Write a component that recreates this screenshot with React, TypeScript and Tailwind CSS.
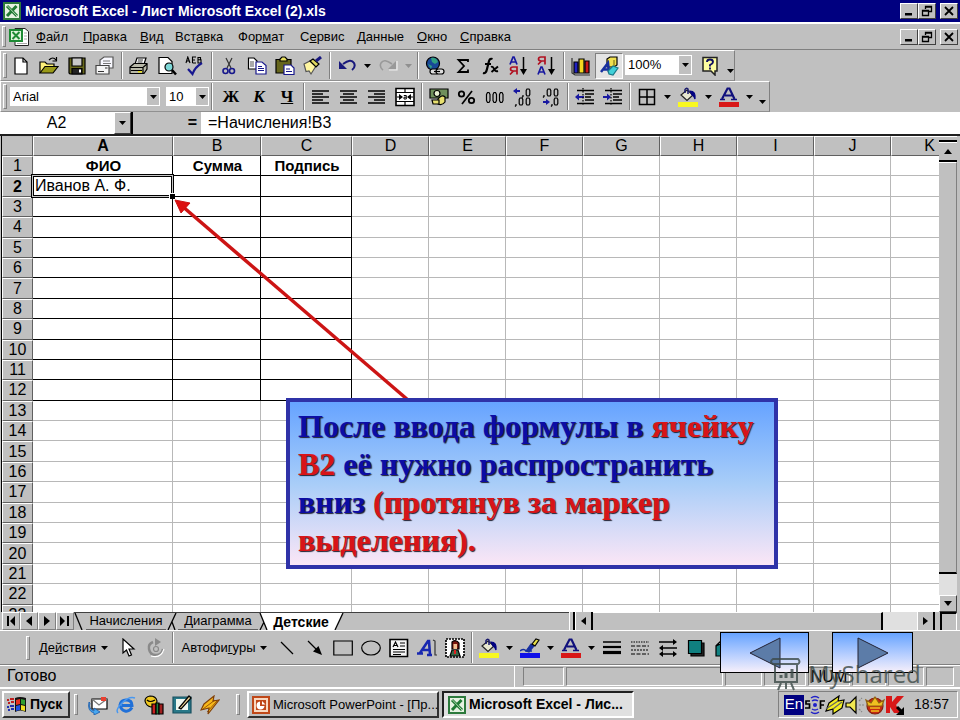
import type { ReactNode } from 'react'

// window furniture
const raised = 'bg-[#c0c0c0] border border-t-white border-l-white border-r-[#404040] border-b-[#404040]'
const sunken = 'border border-t-[#808080] border-l-[#808080] border-r-white border-b-white'

const menu = [
  { key: 'Ф', before: '', after: 'айл', width: 'w-[47px]' },
  { key: 'П', before: '', after: 'равка', width: 'w-[57px]' },
  { key: 'В', before: '', after: 'ид', width: 'w-[35px]' },
  { key: 'а', before: 'Вст', after: 'вка', width: 'w-[63px]' },
  { key: 'м', before: 'Фор', after: 'ат', width: 'w-[62px]' },
  { key: 'е', before: 'С', after: 'рвис', width: 'w-[57px]' },
  { key: 'Д', before: '', after: 'анные', width: 'w-[60px]' },
  { key: 'О', before: '', after: 'кно', width: 'w-[43px]' },
  { key: 'С', before: '', after: 'правка', width: 'w-[60px]' },
]

const columns = ['A', 'B', 'C', 'D', 'E', 'F', 'G', 'H', 'I', 'J', 'K']
const columnWidths = [
  'w-[140px]', 'w-[88px]', 'w-[91px]', 'w-[77px]', 'w-[77px]', 'w-[77px]',
  'w-[77px]', 'w-[77px]', 'w-[77px]', 'w-[77px]', 'w-[77px]',
]
const rows = Array.from({ length: 23 }, (_, i) => i + 1)
const cells: Record<string, string> = { A1: 'ФИО', B1: 'Сумма', C1: 'Подпись', A2: 'Иванов А. Ф.' }

function Icon({ children }: { children: ReactNode }) {
  return (
    <svg viewBox="0 0 20 20" className="size-5 shrink-0" fill="none" stroke="#000" strokeWidth="1.2" aria-hidden="true">
      {children}
    </svg>
  )
}

function Tool({ label, children, pressed }: { label: string; children: ReactNode; pressed?: boolean }) {
  return (
    <button
      type="button"
      aria-label={label}
      className={`flex h-[26px] w-7 shrink-0 items-center justify-center ${pressed ? `bg-[#e4e4e4] ${sunken}` : ''}`}
    >
      {children}
    </button>
  )
}

function Triangle({ gray }: { gray?: boolean }) {
  return (
    <svg viewBox="0 0 7 4" className="h-1 w-[7px] shrink-0" aria-hidden="true">
      <path d="M0 0h7L3.500 4z" fill={gray ? '#909090' : '#000'} />
    </svg>
  )
}

function More({ label, gray, low }: { label: string; gray?: boolean; low?: boolean }) {
  return (
    <button type="button" aria-label={label} className={`flex h-[26px] w-[13px] shrink-0 justify-center ${low ? 'items-end pb-[6px]' : 'items-center'}`}>
      <Triangle gray={gray} />
    </button>
  )
}

function Sep() {
  return (
    <span className="flex w-[6px] shrink-0 justify-center self-stretch">
      <span className="my-px w-[2px] border-l border-l-[#808080] border-r border-r-white" />
    </span>
  )
}

function Grip() {
  return <span className="my-[2px] w-1 shrink-0 self-stretch border border-t-white border-l-white border-r-[#808080] border-b-[#808080]" />
}

function Combo({ label, value, width, height }: { label: string; value: string; width: string; height: string }) {
  return (
    <span className={`relative flex shrink-0 border border-white bg-white ${width} ${height}`}>
      <select aria-label={label} className="w-full appearance-none pr-3 pl-[2px] text-[13px] leading-4 outline-none" defaultValue={value}>
        <option>{value}</option>
      </select>
      <span className="pointer-events-none absolute inset-y-0 right-0 flex w-3 items-center justify-center bg-[#c0c0c0]">
        <Triangle />
      </span>
    </span>
  )
}

function ExcelLogo() {
  return (
    <svg viewBox="0 0 18 18" className="size-[18px] shrink-0" aria-hidden="true">
      <path d="M0 0h18v18H0z" fill="#2c7a3c" />
      <path d="M2 2h14v14H2z" fill="#e6f2e2" />
      <path d="M4 4l10 10M13.500 4L4 14" stroke="#1f7a34" strokeWidth="3" />
      <path d="M4 3.500l10 10.500" stroke="#d8f0d0" strokeWidth=".8" />
    </svg>
  )
}

function SheetLogo() {
  return (
    <svg viewBox="0 0 20 18" className="h-[18px] w-5 shrink-0" aria-hidden="true">
      <path d="M6 .5h10l3.500 3v14H6z" fill="#fff" stroke="#222" />
      <path d="M0 1h14v13H0z" fill="#1d8a34" />
      <path d="M2 3h10v9H2z" fill="#e0f4dc" />
      <path d="M3.500 4l7 7M10.500 4l-7 7" stroke="#1d8a34" strokeWidth="2" />
      <path d="M15 5h3M15 8h3M15 11h3M8 15.500h10" stroke="#aaa" />
    </svg>
  )
}

function WindowButtons() {
  const cls = `flex h-4 w-[18px] items-center justify-center ${raised}`
  return (
    <span className="flex shrink-0 pr-[2px]">
      <button type="button" aria-label="Свернуть" className={cls}>
        <svg viewBox="0 0 12 12" className="size-3"><path d="M2 8h7v2.500H2z" /></svg>
      </button>
      <button type="button" aria-label="Восстановить" className={cls}>
        <svg viewBox="0 0 12 12" className="size-3" fill="none" stroke="#000" strokeWidth="1.300">
          <path d="M4.500 4V1.500h6v5H8M4 2h7M1.500 5.500h6v5h-6zM1 6h7" />
        </svg>
      </button>
      <button type="button" aria-label="Закрыть" className={`ml-1 ${cls}`}>
        <svg viewBox="0 0 12 12" className="size-3"><path d="M2 2l8 8M10 2l-8 8" stroke="#000" strokeWidth="1.800" /></svg>
      </button>
    </span>
  )
}

function FillBucket({ bar }: { bar: string }) {
  return (
    <Icon>
      <path d="M3 8l6-5 6 5-6 5.500z" fill="#e8e8d0" stroke="#222" />
      <path d="M7 6V2.500Q8 .5 10 2v5" stroke="#18186c" strokeWidth="1.500" />
      <path d="M12 4q6 0 5 8-1-3-3-4z" fill="#000080" stroke="#000080" />
      <path d="M0 15h20v5H0z" fill={bar} stroke="none" />
    </Icon>
  )
}

function FontColor() {
  return (
    <Icon>
      <path d="M3 12L8.500 1.500h2L15.500 12M6 8.500h7" stroke="#10107c" strokeWidth="2.200" />
      <path d="M1 12.500h5M12 12.500h6" stroke="#10107c" strokeWidth="1.500" />
      <path d="M0 15h20v5H0z" fill="#d81818" stroke="none" />
    </Icon>
  )
}

function SortIcon({ desc }: { desc?: boolean }) {
  const a = <path d="M1 8.500L4 1h1l3 7.500M2.500 6h4" />
  const ya = <path d="M8 8.500V1H4Q1.500 1.200 1.500 3T4 5h4M4.500 5L1 8.500" />
  return (
    <Icon>
      <g strokeWidth="1.700">
        <g stroke={desc ? '#b01020' : '#1818a0'}>{desc ? ya : a}</g>
        <g stroke={desc ? '#1818a0' : '#b01020'} transform="translate(0 10)">{desc ? a : ya}</g>
      </g>
      <path d="M14.500 1v15" strokeWidth="1.500" />
      <path d="M11 13h7l-3.500 6z" fill="#000" stroke="none" />
    </Icon>
  )
}

function AlignIcon({ d }: { d: string }) {
  return <Icon><path d={d} strokeWidth="1.600" /></Icon>
}

function StandardToolbar() {
  return (
    <div className="flex h-[31px] w-[735px] max-w-full items-center border border-t-white border-l-white border-r-[#808080] border-b-[#909090] pl-[2px]">
      <Grip />
      <Tool label="Создать"><Icon><path d="M4 2h8l4 4v12H4z" fill="#fff" /><path d="M12 2v4h4" /></Icon></Tool>
      <Tool label="Открыть">
        <Icon>
          <path d="M1 17V6h5l2 2h7v3" fill="#fff27a" />
          <path d="M1 17l5-6.500h13L14 17z" fill="#9a9a18" />
          <path d="M10 4q4-4 7 0M17.500 1v4h-4" />
        </Icon>
      </Tool>
      <Tool label="Сохранить">
        <Icon>
          <path d="M2 2h16v16H3l-1-1z" fill="#68681c" />
          <path d="M5 2h10v8H5z" fill="#c8c8c8" />
          <path d="M5 12.500h10V18H5z" fill="#222" />
          <path d="M12 13.500h2v3h-2z" fill="#fff" stroke="none" />
        </Icon>
      </Tool>
      <Tool label="Отправить">
        <Icon>
          <path d="M5 10V4l4-3h9v11h-4" fill="#f8f8ff" stroke="#555" />
          <path d="M8 5h7M8 7.500h8" stroke="#777" />
          <path d="M1 9.500h13V18H1z" fill="#f4f4f4" stroke="#444" />
          <path d="M3 15.500h6M10 12h2.500" stroke="#333" />
        </Icon>
      </Tool>
      <Sep />
      <Tool label="Печать">
        <Icon>
          <path d="M6 8l2-6h9l-2 6" fill="#fff" />
          <path d="M9 4h5M8.500 6h5" strokeWidth=".8" />
          <path d="M1 11l4-3.500h13V13l-3 4.500H1z" fill="#b8b8a8" />
          <path d="M1 11.500h13L18 8M14 12v5M2 14.500h11" />
          <path d="M9 15h4v1.500H9z" fill="#e8e020" stroke="none" />
        </Icon>
      </Tool>
      <Tool label="Просмотр">
        <Icon>
          <path d="M2 1.500h9l4 4v12H2z" fill="#fff" />
          <circle cx="12" cy="11" r="4" fill="#7ed8d8" />
          <path d="M15 14l4 4.500" strokeWidth="2.500" />
        </Icon>
      </Tool>
      <Tool label="Орфография">
        <Icon>
          <path d="M1 7l1.800-6L5 7M1.500 5h3M7.500 7V1H11M7.500 4H10M7.500 7H11M13 7V1.500h2.500v2.200H13h3V7z" strokeWidth="1.100" />
          <path d="M3 13l4.500 5Q10 11 17 7" stroke="#181890" strokeWidth="2.200" />
        </Icon>
      </Tool>
      <Sep />
      <Tool label="Вырезать">
        <Icon>
          <path d="M7 2l5 10M13 2L8 12" stroke="#333" />
          <circle cx="6.500" cy="15" r="2.500" stroke="#18188c" strokeWidth="1.600" />
          <circle cx="13" cy="15" r="2.500" stroke="#18188c" strokeWidth="1.600" />
        </Icon>
      </Tool>
      <Tool label="Копировать">
        <Icon>
          <path d="M1.500 2H7l3 3v8H1.500z" fill="#fff" />
          <path d="M3 6h4M3 8h4M3 10h4" stroke="#555" />
          <path d="M9 6h6l4 3.500V18H9z" fill="#fff" stroke="#18188c" />
          <path d="M11 10.500h4M11 12.500h6M11 14.500h6" stroke="#18188c" />
        </Icon>
      </Tool>
      <Tool label="Вставить">
        <Icon>
          <path d="M1 3.500h15V17H1z" fill="#66661c" />
          <path d="M5 5V3l2-2h3l2 2v2z" fill="#e8e060" />
          <path d="M9 9h7l3 3v6.500H9z" fill="#fff" stroke="#18188c" />
          <path d="M11 13h4M11 15.500h6" stroke="#18188c" />
        </Icon>
      </Tool>
      <Tool label="Формат по образцу">
        <Icon>
          <path d="M1 8l6-3 6 5-5 8-2-3-3 .5z" fill="#fff6a0" stroke="#555" />
          <path d="M7 5l3-2 6 5-3 3z" fill="#e0d860" />
          <path d="M13 5l5-4" stroke="#181880" strokeWidth="3" />
        </Icon>
      </Tool>
      <Sep />
      <Tool label="Отменить"><Icon><path d="M6 8q8-6 11-1 2 4-2 7" stroke="#18187c" strokeWidth="2" /><path d="M2 5v8h8z" fill="#18187c" stroke="none" /></Icon></Tool>
      <More label="Список отмены" />
      <Tool label="Вернуть"><Icon><path d="M14 8Q6 2 3 7q-2 4 2 7" stroke="#999" strokeWidth="1.600" /><path d="M18 5v8h-8z" fill="#999" stroke="none" /><path d="M19 5v9h-8" stroke="#eee" /></Icon></Tool>
      <More label="Список возврата" gray />
      <Sep />
      <Tool label="Гиперссылка">
        <Icon>
          <circle cx="8" cy="7.500" r="6.500" fill="#184898" />
          <path d="M6 2q5-1 7 4l-3 2-3-2zM3 8l4 2-1 3z" fill="#30a080" stroke="none" />
          <rect x="5" y="13" width="8" height="5" rx="2.500" fill="#ddd" />
          <rect x="11" y="13" width="8" height="5" rx="2.500" fill="#ddd" />
          <path d="M9 15.500h6" />
        </Icon>
      </Tool>
      <Tool label="Автосумма"><Icon><path d="M15 6V4H5.500l5.500 6-5.500 6H15v-2.500" strokeWidth="1.800" /></Icon></Tool>
      <Tool label="Вставка функции"><Icon><path d="M2 17q3 1 4-4l2-8q1-3 3.500-2M4 8h6" strokeWidth="2.200" /><path d="M10 11q2-1 3 2t4 2M17 10.500l-6.500 5.500" strokeWidth="1.900" /></Icon></Tool>
      <Tool label="По возрастанию"><SortIcon /></Tool>
      <Tool label="По убыванию"><SortIcon desc /></Tool>
      <Sep />
      <Tool label="Мастер диаграмм">
        <Icon>
          <path d="M1 2v15l3 2h15" stroke="#333" />
          <path d="M3 6h4v11H3z" fill="#2020c0" />
          <path d="M8 3h5v14H8z" fill="#f4d820" />
          <path d="M14 5h4v12h-4z" fill="#c81818" />
        </Icon>
      </Tool>
      <Tool label="Рисование" pressed>
        <Icon>
          <path d="M8 3l3-2h7v8l-3 2H8z" fill="#f0e050" />
          <path d="M15 4v6" stroke="#807818" />
          <path d="M2 16l7-9 1 9M4 13.500h6" stroke="#1830a0" strokeWidth="2.500" />
          <path d="M9 15l5-5 5 2-5 7-4-1z" fill="#40d0d8" stroke="#187888" />
        </Icon>
      </Tool>
      <span className="ml-[2px] mb-[2px] flex"><Combo label="Масштаб" value="100%" width="w-[67px]" height="h-[20px]" /></span>
      <span className="ml-1 flex">
        <Tool label="Справка">
          <Icon>
            <path d="M3 1.500h14V15h-2v4l-4-4H3z" fill="#fdfda0" stroke="#222" strokeWidth="1.500" />
            <path d="M7 6q0-2.500 3-2.500T13 6q0 1.500-3 3v1.500M10 11.500v2" stroke="#101060" strokeWidth="1.900" />
          </Icon>
        </Tool>
      </span>
      <More label="Другие кнопки" low />
    </div>
  )
}

function FormatToolbar() {
  const glyph = "font-['Liberation_Serif',serif] text-[17px] font-bold leading-5"
  return (
    <div className="flex h-[31px] w-[770px] max-w-full items-center border border-t-white border-l-white border-r-[#808080] border-b-[#909090] pl-[2px]">
      <Grip />
      <span className="ml-[3px] flex gap-[6px]">
        <Combo label="Шрифт" value="Arial" width="w-[150px]" height="h-[19px]" />
        <Combo label="Размер" value="10" width="w-[43px]" height="h-[19px]" />
      </span>
      <Sep />
      <span className="ml-[2px] flex">
        <Tool label="Полужирный"><span className={glyph}>Ж</span></Tool>
        <Tool label="Курсив"><span className={`${glyph} italic`}>К</span></Tool>
        <Tool label="Подчёркнутый"><span className={`${glyph} underline`}>Ч</span></Tool>
      </span>
      <Sep />
      <Tool label="По левому краю"><AlignIcon d="M1 4h17M1 7h11M1 10h17M1 13h11M1 16h17" /></Tool>
      <Tool label="По центру"><AlignIcon d="M1 4h17M4 7h11M1 10h17M4 13h11M1 16h17" /></Tool>
      <Tool label="По правому краю"><AlignIcon d="M1 4h17M7 7h11M1 10h17M7 13h11M1 16h17" /></Tool>
      <Tool label="Объединить">
        <Icon>
          <path d="M1 1.500h18v17H1z" fill="#fff" strokeWidth="1.600" />
          <path d="M1 5.500h18M1 14.500h18M10 1v4M10 15v4" />
          <path d="M2 10h5M18 10h-5" />
          <path d="M4 7l4 3-4 3zM16 7l-4 3 4 3z" fill="#000" stroke="none" />
          <path d="M8.800 8.500h2.500V12H9v-1.800h2" strokeWidth="1" />
        </Icon>
      </Tool>
      <Sep />
      <Tool label="Денежный формат">
        <Icon>
          <path d="M1 2h18v9H1z" fill="#70905c" />
          <circle cx="8" cy="6.500" r="3" fill="#e8f0d0" />
          <path d="M9 12q4-5 7-2v5q-3 4-7 2z" fill="#e8e070" />
          <path d="M3 13h7v4H4z" fill="#e8e070" />
        </Icon>
      </Tool>
      <Tool label="Процентный формат"><Icon><circle cx="4.500" cy="7" r="2.700" strokeWidth="1.800" /><circle cx="14.500" cy="13.500" r="2.700" strokeWidth="1.800" /><path d="M15 4L5 17" strokeWidth="1.700" /></Icon></Tool>
      <Tool label="Формат с разделителями"><Icon><path d="M2.500 5.500h1.500l1 2v6l-1 2H2.500l-1-2v-6zM9 5.500h1.500l1 2v6l-1 2H9l-1-2v-6zM15.500 5.500H17l1 2v6l-1 2h-1.500l-1-2v-6z" /></Icon></Tool>
      <Tool label="Увеличить разрядность">
        <Icon>
          <path d="M7 4H3" stroke="#1818a0" strokeWidth="2" /><path d="M4 1v6L0 4z" fill="#1818a0" stroke="none" />
          <path d="M10 8v1.500l-1 1M14 2h2l.8 1.500v4L16 9h-2l-.8-1.500v-4zM3 17v1.500l-1 1M7 11h2l.8 1.500v4L9 18H7l-.8-1.500v-4zM14 11h2l.8 1.500v4L16 18h-2l-.8-1.500v-4z" />
        </Icon>
      </Tool>
      <Tool label="Уменьшить разрядность">
        <Icon>
          <path d="M2 15h5" stroke="#1818a0" strokeWidth="2" /><path d="M5 12v6l4-3z" fill="#1818a0" stroke="none" />
          <path d="M3 8v1.500l-1 1M7 2h2l.8 1.500v4L9 9H7l-.8-1.500v-4zM14 2h2l.8 1.500v4L16 9h-2l-.8-1.500v-4zM11 17v1.500l-1 1M14 11h2l.8 1.500v4L16 18h-2l-.8-1.500v-4z" />
        </Icon>
      </Tool>
      <Sep />
      <Tool label="Уменьшить отступ"><Icon><path d="M2 3.500h17M10 7h9M10 10h6M10 13h9M2 16.500h17" strokeWidth="1.500" /><path d="M9 10H3" stroke="#1818a0" strokeWidth="2" /><path d="M4 6.500v7L0 10z" fill="#1818a0" stroke="none" /><path d="M8 1v18" strokeDasharray="1.500 1.500" /></Icon></Tool>
      <Tool label="Увеличить отступ"><Icon><path d="M2 3.500h17M10 7h9M10 10h6M10 13h9M2 16.500h17" strokeWidth="1.500" /><path d="M0 10h5" stroke="#1818a0" strokeWidth="2" /><path d="M4 6.500v7L8 10z" fill="#1818a0" stroke="none" /><path d="M8 1v18" strokeDasharray="1.500 1.500" /></Icon></Tool>
      <Sep />
      <Tool label="Границы"><Icon><path d="M2.500 2.500h15v15h-15zM10 2v16M2 10h16" strokeWidth="1.500" /></Icon></Tool>
      <More label="Виды границ" />
      <Tool label="Цвет заливки"><FillBucket bar="#f8f820" /></Tool>
      <More label="Цвета заливки" />
      <Tool label="Цвет шрифта"><FontColor /></Tool>
      <More label="Цвета шрифта" />
      <More label="Другие кнопки" low />
    </div>
  )
}

function FormulaBar() {
  return (
    <div className="flex h-[22px] shrink-0">
      <span className="relative flex w-[133px] shrink-0 border-r-2 border-r-black bg-white">
        <select aria-label="Имя" className="w-full appearance-none pr-[18px] text-[16px] leading-5 outline-none [text-align-last:center]">
          <option>A2</option>
        </select>
        <span className={`pointer-events-none absolute inset-y-0 right-0 flex w-[17px] items-center justify-center ${raised}`}>
          <Triangle />
        </span>
      </span>
      <button type="button" aria-label="Изменить формулу" className="flex w-[68px] shrink-0 items-center justify-end pr-1 text-[16px] font-bold">=</button>
      <input aria-label="Строка формул" defaultValue="=Начисления!B3" className="min-w-0 flex-1 bg-white pl-[7px] text-[16px] leading-5 outline-none" />
    </div>
  )
}

function cellClass(col: string, row: number) {
  const ruled = 'ABC'.includes(col) && row <= 12
  const head = row === 1 ? 'text-center text-[15px] font-bold' : 'text-left text-[16px]'
  return `relative overflow-visible border-r border-b p-0 pl-[2px] ${head} ${ruled ? 'border-black' : 'border-[#b8b8b8]'}`
}

function Sheet() {
  return (
    <div className="flex h-[476px] shrink-0 bg-[#c0c0c0]">
      <div className="ml-px min-w-0 flex-1 overflow-hidden border-l border-l-black bg-white">
        <table className="h-[489px] w-[966px] table-fixed border-separate border-spacing-0 leading-4">
          <colgroup>
            <col className="w-[31px]" />
            {columns.map((c, i) => <col key={c} className={columnWidths[i]} />)}
          </colgroup>
          <thead>
            <tr>
              <th aria-label="Выделить всё" className="h-5 border-r border-b border-[#606060] bg-[#c0c0c0] p-0" />
              {columns.map((c) => (
                <th
                  key={c}
                  scope="col"
                  className={`h-5 border border-t-white border-l-white border-r-[#606060] border-b-[#606060] bg-[#c0c0c0] p-0 text-[16px] ${c === 'A' ? 'font-bold' : 'font-normal'}`}
                >
                  {c}
                </th>
              ))}
            </tr>
          </thead>
          <tbody>
            {rows.map((r) => (
              <tr key={r}>
                <th
                  scope="row"
                  className={`border border-t-white border-l-white border-r-[#606060] border-b-[#606060] bg-[#c0c0c0] p-0 text-center text-[16px] ${r === 2 ? 'font-bold' : 'font-normal'}`}
                >
                  {r}
                </th>
                {columns.map((c) => (
                  <td key={c} className={cellClass(c, r)}>
                    {cells[c + r]}
                    {c === 'A' && r === 2 && (
                      <>
                        <span className="pointer-events-none absolute -inset-[2px] border border-black shadow-[inset_0_0_0_1px_#c8c8c8,inset_0_0_0_2px_#000]" />
                        <span className="absolute -right-[4px] -bottom-[4px] size-[7px] border border-white bg-black" />
                      </>
                    )}
                  </td>
                ))}
              </tr>
            ))}
          </tbody>
        </table>
      </div>
      <div className="flex w-[18px] shrink-0 flex-col">
        <span className="h-[6px] border-t border-b-2 border-t-white border-b-black" />
        <button type="button" aria-label="Вверх" className="flex h-5 items-center justify-center border-t border-b-2 border-t-white border-b-black">
          <svg viewBox="0 0 8 5" className="h-[5px] w-2"><path d="M4 0l4 5H0z" /></svg>
        </button>
        <span className="h-[412px] border-t border-r border-b-2 border-t-white border-r-[#808080] border-b-black" />
        <span className="flex-1 bg-[#e0e0e0]" />
        <button type="button" aria-label="Вниз" className={`flex h-[17px] items-center justify-center ${raised}`}>
          <svg viewBox="0 0 8 5" className="h-[5px] w-2"><path d="M0 0h8L4 5z" /></svg>
        </button>
      </div>
      <span className="w-[3px] shrink-0" />
    </div>
  )
}

const sheetNav = [
  { label: 'Первый лист', d: 'M2 1h2v10H2zM10 1v10L5 6z' },
  { label: 'Предыдущий лист', d: 'M9 1v10L3 6z' },
  { label: 'Следующий лист', d: 'M3 1v10l6-5z' },
  { label: 'Последний лист', d: 'M1 1v10l5-5zM8 1h2v10H8z' },
]

function Slash({ d, fill }: { d: string; fill?: string }) {
  return (
    <svg viewBox="0 0 12 17" className="h-[17px] w-3 shrink-0" aria-hidden="true">
      {fill && <path d={fill} fill="#fff" />}
      <path d={d} fill="none" stroke="#000" strokeWidth="1.300" />
    </svg>
  )
}

function SheetTabs() {
  return (
    <div className="flex h-[18px] shrink-0 items-stretch pl-[2px]">
      {sheetNav.map((n) => (
        <button key={n.label} type="button" aria-label={n.label} className="flex w-[18px] shrink-0 items-center justify-center border border-t-white border-l-white border-r-[#808080] border-b-[#808080]">
          <svg viewBox="0 0 12 12" className="size-3"><path d={n.d} /></svg>
        </button>
      ))}
      <div className="flex flex-1 border-t border-t-[#404040] text-[13px] leading-4">
        <Slash d="M1 0l7 17" />
        <button type="button" className="w-[80px] shrink-0 border-b border-b-[#606060] text-center">Начисления</button>
        <Slash d="M10 0L2 17M6 9l3 8" />
        <button type="button" className="w-[80px] shrink-0 border-b border-b-[#606060] text-center">Диаграмма</button>
        <Slash d="M2 0l7 17M6 9l-4 8" fill="M2 0h10v17H9z" />
        <button type="button" className="w-[62px] shrink-0 bg-white text-center text-[14px] font-bold">Детские</button>
        <Slash d="M11 0L3 17" fill="M0 0h11L3 17H0z" />
        <span className="flex-1" />
      </div>
      <div className="flex w-[391px] shrink-0">
        <span className="w-[6px] border-r-2 border-r-black border-l border-l-white" />
        <button type="button" aria-label="Влево" className="flex w-[18px] items-center justify-center border-r-2 border-r-black border-l border-l-white">
          <svg viewBox="0 0 5 8" className="h-2 w-[5px]"><path d="M5 0v8L0 4z" /></svg>
        </button>
        <span className="w-[290px] border-t border-r-2 border-t-white border-r-black" />
        <span className="w-[34px] bg-[#e0e0e0]" />
        <button type="button" aria-label="Вправо" className="flex w-[18px] items-center justify-center border-r-2 border-r-black border-l border-l-white">
          <svg viewBox="0 0 5 8" className="h-2 w-[5px]"><path d="M0 0v8l5-4z" /></svg>
        </button>
        <span className="mr-[3px] ml-[5px] flex-1 border-t-2 border-r border-l-2 border-t-black border-r-white border-l-black" />
      </div>
    </div>
  )
}

function DrawingToolbar() {
  return (
    <div className="flex h-[35px] shrink-0 items-center border-t border-b border-t-white border-b-[#808080] pl-6 text-[13px]">
      <span className="flex h-[28px] pr-[3px] pl-[2px]"><Grip /></span>
      <button type="button" className="flex w-[81px] shrink-0 items-center justify-center gap-[5px]">
        <span>Де<u>й</u>ствия</span><Triangle />
      </button>
      <Tool label="Выбор объектов"><Icon><path d="M5 1v14l3.500-3 2.500 6 2.500-1-2.500-6h5z" fill="#fff" /></Icon></Tool>
      <Tool label="Свободное вращение"><Icon><path d="M7 4q-5 2-4 7 1 6 7 6t7-6" stroke="#8a8a8a" strokeWidth="2.500" /><path d="M9 0v8l6-4z" fill="#8a8a8a" stroke="none" /><circle cx="10" cy="11" r="2.500" stroke="#888" /><path d="M5 18q10 3 13-7" stroke="#fff" /></Icon></Tool>
      <Sep />
      <button type="button" className="flex w-[97px] shrink-0 items-center justify-center gap-[5px]">
        <span>Автофи<u>г</u>уры</span><Triangle />
      </button>
      <Tool label="Линия"><Icon><path d="M4 4l12 12" /></Icon></Tool>
      <Tool label="Стрелка"><Icon><path d="M3 3l9 9" /><path d="M17 17l-9-3.500L13.500 8z" fill="#000" stroke="none" /></Icon></Tool>
      <Tool label="Прямоугольник"><Icon><path d="M.800 3h18.500v14H.800z" /></Icon></Tool>
      <Tool label="Овал"><Icon><ellipse cx="10" cy="10" rx="9.300" ry="7" /></Icon></Tool>
      <Tool label="Надпись"><Icon><path d="M1 1.500h17.500v17H1z" fill="#f4f4f4" strokeWidth="1.600" /><path d="M4 9l2.500-5L9 9M5 7.500h3M11 5h5M11 8h5M4 11.500h12M4 14h12M4 16.500h8" /></Icon></Tool>
      <Tool label="Объект WordArt"><Icon><path d="M3 15L11 3h1l1 14M6 12h7M0 15.500h6M10 17h5" stroke="#1828b0" strokeWidth="2.600" /><path d="M16 2l2 1v14h2" stroke="#333" /></Icon></Tool>
      <Tool label="Картинка"><Icon><path d="M1 1h18v18H1z" fill="#fff" strokeDasharray="2 1" strokeWidth="1.700" /><path d="M7 4q4-3 7 1v6H7z" fill="#7a1810" /><path d="M8.500 6h3.500v5H8.500z" fill="#f0c090" stroke="none" /><path d="M5 18l2-6h6l2 6z" fill="#386848" /><path d="M10 12v4" stroke="#e02020" strokeWidth="2" /></Icon></Tool>
      <Sep />
      <Tool label="Цвет заливки"><FillBucket bar="#f8f820" /></Tool>
      <More label="Цвета заливки" />
      <Tool label="Цвет линий"><Icon><path d="M6 13l5-7 3 2-5 6z" fill="#1830a0" stroke="#1830a0" /><path d="M12 6l4-5 3 1-4 6z" fill="#e8e048" /><path d="M0 13q4-3 6 0h6" stroke="#1830a0" strokeWidth="1.500" /><path d="M0 15h20v5H0z" fill="#1010e8" stroke="none" /></Icon></Tool>
      <More label="Цвета линий" />
      <Tool label="Цвет шрифта"><FontColor /></Tool>
      <More label="Цвета шрифта" />
      <Tool label="Тип линии"><Icon><path d="M1 4h18" strokeWidth="1.500" /><path d="M1 9h18" strokeWidth="2.200" /><path d="M1 14.500h18" strokeWidth="3.200" /></Icon></Tool>
      <Tool label="Тип штриха"><Icon><path d="M1 4h18" strokeDasharray="1.500 1" /><path d="M1 8h18M1 16h18" strokeDasharray="4 1.500" /><path d="M1 12h18" strokeDasharray="2 1" /></Icon></Tool>
      <Tool label="Вид стрелки"><Icon><path d="M1 4h15M4 10h15M3 16h14" strokeWidth="1.500" /><path d="M15 1l4 3-4 3zM5 7l-4 3 4 3zM5 13l-4 3 4 3zM15 13l4 3-4 3z" fill="#000" stroke="none" /></Icon></Tool>
      <Tool label="Тень"><Icon><path d="M5 5h13v13H5z" fill="#222" /><path d="M2.500 2.500h13v13h-13z" fill="#108080" /></Icon></Tool>
      <Tool label="Объём"><Icon><path d="M2 8l6-6h12v16H2z" fill="#108080" /><path d="M2 8l6-6h12v3H9z" fill="#e8ffff" /></Icon></Tool>
    </div>
  )
}

function StatusBar() {
  return (
    <div className="flex h-[22px] shrink-0 items-stretch border-t border-t-white text-[16px] leading-5">
      <span className="w-[515px] border-r border-r-white pl-[7px]">Готово</span>
      <span className={`my-px ml-2 w-[41px] ${sunken}`} />
      <span className={`my-px ml-[2px] min-w-0 flex-1 ${sunken}`} />
      <span className={`my-px ml-[2px] w-[37px] ${sunken}`} />
      <span className={`my-px ml-[2px] w-[42px] ${sunken}`} />
      <span className={`my-px ml-[2px] w-[42px] text-center leading-[18px] ${sunken}`}>NUM</span>
      <span className={`my-px ml-[2px] w-[34px] ${sunken}`} />
      <span className={`my-px ml-[2px] w-[36px] ${sunken}`} />
      <span className={`my-px mr-[6px] ml-[2px] w-[28px] ${sunken}`} />
    </div>
  )
}

function Taskbar() {
  return (
    <div className="flex h-[33px] shrink-0 items-center border-t-2 border-t-white pl-[2px] text-[14px]">
      <button type="button" className="flex h-[27px] w-[68px] shrink-0 items-center gap-[3px] border-2 border-t-white border-l-white border-r-[#303030] border-b-[#303030] pl-[3px] text-[14px] font-bold">
        <svg viewBox="0 0 20 18" className="h-[18px] w-5" aria-hidden="true">
          <path d="M8 2q5-2 11 0v14q-6-3-11 0z" fill="#111" />
          <path d="M9 4l4-1v5l-4 1z" fill="#e83020" /><path d="M14 3l4 1v5l-4-1z" fill="#30a030" />
          <path d="M9 10l4-1v5l-4 1z" fill="#2050e0" /><path d="M14 9l4 1v5l-4-1z" fill="#f0e020" />
          <path d="M0 4h2M3 3h4M1 7h2M4 6h3" stroke="#c02020" strokeWidth="2" /><path d="M0 11h2M3 10h4M1 14h2M4 13h3" stroke="#2030b0" strokeWidth="2" />
        </svg>
        Пуск
      </button>
      <span className="ml-1 flex h-[25px]"><Grip /></span>
      <div className="ml-[6px] flex">
        <Tool label="Outlook Express"><Icon><path d="M4 4h15v10H4z" fill="#fff" /><path d="M4 4l7 6 8-6" stroke="#777" /><path d="M2 8q-2 6 4 8v-3l6 4-6 3v-2Q-1 16 1 7z" fill="#48a8f0" stroke="#1858a8" strokeWidth=".8" /><path d="M13 2h5v4h-5z" fill="#e84030" stroke="none" /></Icon></Tool>
        <Tool label="Internet Explorer"><Icon><path d="M16 12.500Q13 17 9 16t-5-6q1-5 6-5 6 0 6 5.500H6" stroke="#2070d8" strokeWidth="3" /><path d="M2 18q-3-3 4-10T19 3" stroke="#4898f0" strokeWidth="1.500" /></Icon></Tool>
        <Tool label="Проигрыватель"><Icon><path d="M1 6q0-4 5-5 6 0 7 5 0 5-6 6-5-1-6-6z" fill="#f0c820" /><path d="M3 5q3 3 8 0" /><path d="M8 9h4v10H8z" fill="#c82020" /><path d="M12 8h3v11h-3z" fill="#208040" /><path d="M15 9h4v10h-4z" fill="#a02020" /></Icon></Tool>
        <Tool label="Свернуть все окна"><Icon><path d="M1 2h18v16H1z" fill="#287888" stroke="#185060" /><path d="M4 4h12v11H4z" fill="#f0f8f0" stroke="none" /><path d="M7 13L17 1l2 2L9 14z" fill="#f0d898" /></Icon></Tool>
        <Tool label="Winamp"><Icon><path d="M4 9L14 1l-1 5 6-1L8 19l1-6-8 2z" fill="#f8b818" stroke="#804008" /><path d="M3 14l12-9M7 17L17 6" stroke="#804008" strokeWidth=".8" /></Icon></Tool>
      </div>
      <span className="ml-3 flex h-[25px]"><Grip /></span>
      <button type="button" className="ml-[7px] flex h-[27px] w-[192px] shrink-0 items-center gap-[3px] border-2 border-t-white border-l-white border-r-[#303030] border-b-[#303030] pl-[3px] whitespace-nowrap">
        <svg viewBox="0 0 18 18" className="size-[18px] shrink-0" aria-hidden="true">
          <path d="M0 0h18v18H0z" fill="#c04818" /><path d="M2 2h14v14H2z" fill="#f8d8c0" /><path d="M4 4h10v10H4z" fill="#c04818" />
          <path d="M8 5.500V10h4.500A4 4 0 1 1 8 5.500zM10 5v3.500h3.500z" fill="#fff" />
        </svg>
        <span className="text-[13px]">Microsoft PowerPoint - [Пр...</span>
      </button>
      <button type="button" aria-pressed="true" className="ml-[3px] flex h-[27px] w-[192px] shrink-0 items-center gap-[3px] border-2 border-t-[#202020] border-l-[#202020] border-r-white border-b-white bg-[#e0e0e0] pl-1 font-bold whitespace-nowrap">
        <ExcelLogo />
        <span className="text-[14px]">Microsoft Excel - Лис...</span>
      </button>
      <span className="flex-1" />
      <div className={`mr-[2px] flex h-[27px] w-[180px] shrink-0 items-center pl-[5px] ${sunken}`}>
        <span className="mr-[1px] flex h-5 w-5 items-center justify-center bg-[#000080] text-[15px] text-white">En</span>
        <Icon><path d="M5 6H1v3h3.500v4H0M15.500 14V6H20M16 10h3" strokeWidth="1.700" /><circle cx="10" cy="10" r="2" fill="#2020c8" stroke="none" /><path d="M6 3q4-3 8 0M7 6q3-2 6 0M7 14q3 2 6 0M6 17q4 3 8 0" stroke="#2020c8" strokeWidth="1.500" /></Icon>
        <Icon><path d="M4 8L14 1l-1 5 6-1-2 8-9 6 0-5-7 2z" fill="#f4f020" /><path d="M1 14L13 6M8 14l9-7" stroke="#666" /></Icon>
        <Icon><path d="M1 8h4l6-6v16l-6-6H1z" fill="#f0e850" /><path d="M14 6l3-3M14 10h5M14 14l3 3" stroke="#888" strokeDasharray="2 1" /></Icon>
        <Icon><circle cx="10" cy="11" r="8" fill="#c82810" stroke="#802010" /><path d="M1 5l5 3 4-6 4 6 5-3-2 6H3z" fill="#f0c020" stroke="#906010" /><path d="M5 13h10M6 16h8" stroke="#f0c020" strokeWidth="1.500" /></Icon>
        <Icon><path d="M1 1h6v6l5-6h7l-8 9 5 8H9l-4-6v6H1z" fill="#d81818" stroke="none" /><path d="M12 12l4 4" strokeWidth="3" /><path d="M19 12v8h-8z" fill="#000" stroke="none" /></Icon>
        <span className="flex-1 pr-[8px] text-right text-[14px]">18:57</span>
      </div>
    </div>
  )
}

// slide annotations that lie over the worksheet
function Annotations() {
  const nav = 'absolute top-[632px] flex h-[41px] items-center justify-center border border-black bg-linear-to-b from-[#66a3ff] to-[#f6effa]'
  return (
    <>
      <svg className="pointer-events-none absolute top-[196px] left-[170px] h-[206px] w-[242px]" viewBox="0 0 242 206" aria-hidden="true">
        <path d="M238 204L12 10" stroke="#cc1414" strokeWidth="3.500" />
        <path d="M5 4l15 3-9 10z" fill="#dc1010" stroke="#cc1414" />
      </svg>
      <p className="absolute top-[398px] left-[286px] h-[171px] w-[492px] border-4 border-[#2f32a8] bg-linear-to-b from-[#66a3ff] via-[#a8cdf8] to-[#fbe6f6] pt-[5px] pl-2 font-['Liberation_Serif',serif] text-[32px] leading-[38px] font-bold whitespace-nowrap text-[#0c0ca4] [text-shadow:1px_1px_1px_#202030]">
        После ввода формулы в <span className="text-[#d81418]">ячейку</span>
        <br />
        <span className="text-[#d81418]">В2</span> её нужно распространить
        <br />
        вниз <span className="text-[#d81418]">(протянув за маркер</span>
        <br />
        <span className="text-[#d81418]">выделения).</span>
      </p>
      <button type="button" aria-label="Назад" className={`${nav} left-[720px] w-[89px]`}>
        <svg viewBox="0 0 32 32" className="size-8"><path d="M31 1v30L1 16z" fill="#5c7ca8" stroke="#223" /></svg>
      </button>
      <button type="button" aria-label="Вперёд" className={`${nav} left-[832px] w-[81px]`}>
        <svg viewBox="0 0 32 32" className="size-8"><path d="M1 1v30l30-15z" fill="#5c7ca8" stroke="#223" /></svg>
      </button>
      <div className="pointer-events-none absolute top-[657px] left-[768px] flex items-center gap-[6px] text-[#3c4a48] opacity-80">
        <svg viewBox="0 0 34 34" className="size-[34px]" fill="none" stroke="currentColor" strokeWidth="2" aria-hidden="true">
          <path d="M5 2h25q3 3 0 5H5Q1 5 5 2zM7 7v18h22V7M13 26l-3 7M18 26v6M23 26l3 7" />
          <path d="M13 21v-3M18 21v-6M24 21v-9" strokeWidth="3" />
        </svg>
        <span className="font-['Open_Sans',sans-serif] text-[24px] leading-8">MyShared</span>
      </div>
    </>
  )
}

export default function App() {
  return (
    <div className="relative flex min-h-screen flex-col overflow-hidden bg-[#c0c0c0] font-['Liberation_Sans',Arial,sans-serif] text-black">
      <header className="flex h-[22px] shrink-0 items-center bg-[#000080] pl-[3px] text-white">
        <ExcelLogo />
        <h1 className="ml-1 flex-1 truncate text-[14px] leading-5 font-bold">Microsoft Excel - Лист Microsoft Excel (2).xls</h1>
        <WindowButtons />
      </header>
      <nav className="flex h-[28px] shrink-0 items-center border-t-2 border-b border-t-white border-b-[#808080] pl-[2px] text-[13px]">
        <Grip />
        <span className="mr-1 ml-[3px] flex"><SheetLogo /></span>
        {menu.map((m) => (
          <button key={m.key + m.after} type="button" className={`shrink-0 pl-[3px] text-left leading-5 ${m.width}`}>
            {m.before}<u>{m.key}</u>{m.after}
          </button>
        ))}
        <span className="flex-1" />
        <WindowButtons />
      </nav>
      <StandardToolbar />
      <FormatToolbar />
      <FormulaBar />
      <div className="h-[2px] shrink-0 bg-[#202020]" />
      <Sheet />
      <SheetTabs />
      <DrawingToolbar />
      <StatusBar />
      <Taskbar />
      <Annotations />
    </div>
  )
}
